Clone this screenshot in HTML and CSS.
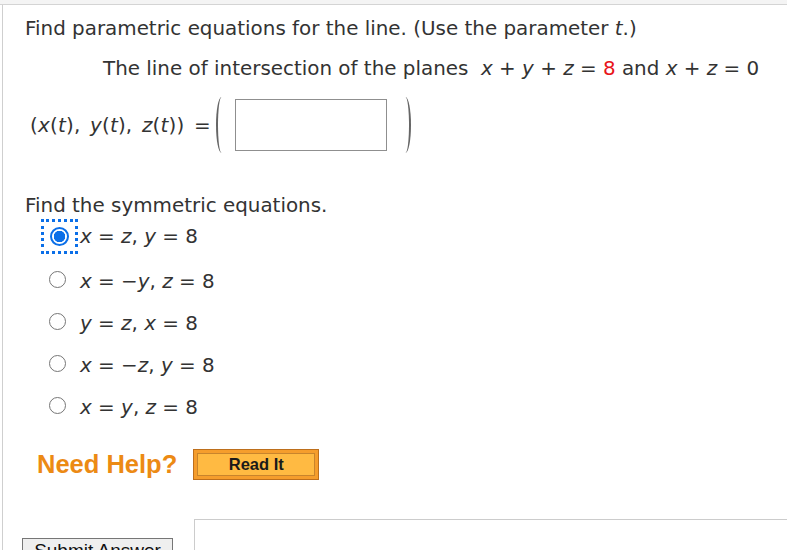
FILE: index.html
```html
<!DOCTYPE html>
<html>
<head>
<meta charset="utf-8">
<link rel="stylesheet" href="styles.css">
</head>
<body>
<div class="topbar"></div>
<div class="panel">
  <p class="q">Find parametric equations for the line. (Use the parameter <i>t</i>.)</p>
  <p class="given">The line of intersection of the planes&nbsp; <i>x</i> + <i>y</i> + <i>z</i> = <span class="red">8</span> and <i>x</i> + <i>z</i> = 0</p>
  <div class="param">
    <span class="lhs">(<i>x</i>(<i>t</i>), <i>y</i>(<i>t</i>), <i>z</i>(<i>t</i>)) =</span>
    <span class="paren left"></span>
    <span class="answer"></span>
    <span class="paren right"></span>
  </div>
  <p class="q2">Find the symmetric equations.</p>
  <div class="options">
    <div class="opt first"><span class="focus"><span class="radio checked"></span></span><span class="label"><i>x</i> = <i>z</i>, <i>y</i> = 8</span></div>
    <div class="opt"><span class="radio"></span><span class="label"><i>x</i> = −<i>y</i>, <i>z</i> = 8</span></div>
    <div class="opt"><span class="radio"></span><span class="label"><i>y</i> = <i>z</i>, <i>x</i> = 8</span></div>
    <div class="opt"><span class="radio"></span><span class="label"><i>x</i> = −<i>z</i>, <i>y</i> = 8</span></div>
    <div class="opt"><span class="radio"></span><span class="label"><i>x</i> = <i>y</i>, <i>z</i> = 8</span></div>
  </div>
  <div class="help">
    <span class="needhelp">Need Help?</span>
    <span class="readit"><span class="readit-inner">Read It</span></span>
  </div>
  <div class="bottom">
    <span class="submit">Submit Answer</span>
    <div class="notes"></div>
  </div>
</div>
</body>
</html>
```
FILE: styles.css
```css
html, body {
  margin: 0;
  padding: 0;
  background: #fff;
  overflow: hidden;
}
body {
  font-family: "DejaVu Sans", Verdana, sans-serif;
  font-size: 19.9px;
  color: #333;
  width: 787px;
  height: 550px;
}
.topbar {
  height: 4px;
  background: #f4f4f4;
  border-bottom: 1px solid #d4d4d4;
}
.panel {
  margin-left: 2px;
  border-left: 1px solid #cfcfcf;
  padding-left: 22px;
  height: 545px;
  overflow: hidden;
}
p { margin: 0; }
i { font-style: italic; }
.q {
  padding-top: 12px;
  line-height: 23px;
}
.given {
  margin-top: 17px;
  padding-left: 78px;
  line-height: 23px;
}
.red { color: #e8141a; }
.param {
  display: flex;
  align-items: center;
  margin-top: 17px;
  padding-left: 5px;
  height: 56px;
}
.lhs {
  word-spacing: 3px;
  letter-spacing: 0.2px;
}
.paren {
  display: block;
  width: 11px;
  height: 56px;
  box-sizing: border-box;
  border-radius: 50%;
}
.paren.left {
  margin-left: 5px;
  border-left: 2px solid #666;
}
.paren.right {
  margin-left: 13px;
  border-right: 2px solid #666;
}
.answer {
  display: block;
  width: 152px;
  height: 52px;
  box-sizing: border-box;
  border: 1px solid #8f8f8f;
  margin-left: 8px;
}
.q2 {
  margin-top: 41px;
  line-height: 23px;
}
.options {
  display: flex;
  flex-direction: column;
}
.opt {
  display: flex;
  align-items: center;
  height: 42px;
  padding-left: 24px;
}
.opt.first {
  padding-left: 16px;
  height: 38px;
  margin-bottom: 5px;
}
.focus {
  display: flex;
  padding: 5px 6px;
  border: 3px dotted #0b6fe8;
}
.radio {
  display: block;
  width: 17px;
  height: 17px;
  box-sizing: border-box;
  border: 1.5px solid #767676;
  border-radius: 50%;
  margin-bottom: 3px;
}
.focus .radio { margin-bottom: 0; }
.radio.checked {
  width: 19px;
  height: 19px;
  border: 2px solid #0b6fe8;
  background: radial-gradient(circle, #0b6fe8 0, #0b6fe8 5.5px, #fff 6px);
}
.label { margin-left: 14px; }
.first .label { margin-left: 2px; }
.help {
  display: flex;
  align-items: center;
  margin-top: 21px;
  padding-left: 12px;
}
.needhelp {
  font-family: "Liberation Sans", Arial, sans-serif;
  font-weight: bold;
  font-size: 25.5px;
  color: #ec8a14;
}
.readit {
  display: block;
  margin-left: 16px;
  width: 126px;
  height: 31px;
  box-sizing: border-box;
  border: 1px solid #bd6f1c;
  background: #f59d2c;
  padding: 3px;
}
.readit-inner {
  display: flex;
  align-items: center;
  justify-content: center;
  height: 100%;
  box-sizing: border-box;
  border: 1px solid #c8842c;
  background: #ffba42;
  font-family: "Liberation Sans", Arial, sans-serif;
  font-weight: bold;
  font-size: 16.5px;
  color: #1a1a1a;
}
.bottom {
  display: flex;
  align-items: flex-start;
  margin-top: 39px;
  margin-left: -3px;
}
.submit {
  display: block;
  margin-top: 19px;
  width: 151px;
  height: 30px;
  box-sizing: border-box;
  border: 1px solid #767676;
  background: #efefef;
  font-family: "Liberation Sans", Arial, sans-serif;
  font-size: 19px;
  color: #111;
  text-align: center;
  line-height: 24px;
}
.notes {
  margin-left: 21px;
  flex: 1;
  height: 60px;
  border: 1px solid #cccccc;
  border-right: none;
}
```
